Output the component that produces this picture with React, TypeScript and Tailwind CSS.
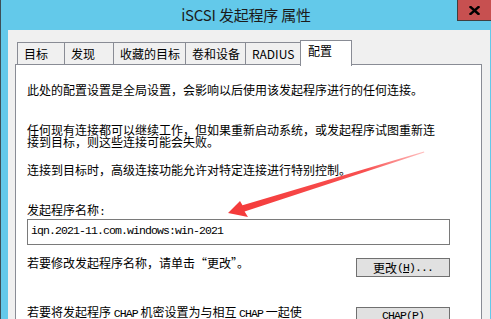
import React from "react";

const cjk = { fontFamily: '"Noto Sans CJK SC", "Noto Sans", sans-serif' };
const mono = { fontFamily: '"Liberation Mono", "Noto Sans CJK SC", monospace' };

function M({ children }: { children: React.ReactNode }) {
  return (
    <span className="text-[11.5px] tracking-[-0.9px]" style={mono}>
      {children}
    </span>
  );
}

function Tab({ label, w, active }: { label: string; w: string; active?: boolean }) {
  if (active) {
    return (
      <div
        className={`${w} h-[26px] -mb-[2px] relative z-10 bg-white border border-b-0 border-[#898c95] pl-[7px] pt-[3px] text-[12px] leading-[14px] text-black`}
      >
        {label}
      </div>
    );
  }
  return (
    <div
      className={`${w} h-[22px] bg-[#f0f0f0] border-l border-t border-[#898c95] pl-[6px] flex items-center text-[12px] leading-[12px] text-black`}
    >
      {label}
    </div>
  );
}

export default function App() {
  return (
    <div
      className="w-[491px] h-[319px] relative overflow-hidden bg-[#63c9ea] border-l border-[#3d4f57] flex flex-col"
      style={cjk}
    >
      {/* title bar */}
      <div className="h-[30px] shrink-0 relative flex items-center justify-center">
        <span className="text-[15px] leading-[18px] text-[#1b1b1b] tracking-[-0.2px]">
          iSCSI 发起程序 属性
        </span>
        <div className="absolute right-0 top-0 w-[34px] h-[21px] bg-[#c75050] border-l border-b border-[#3f3f3f] flex items-center justify-center">
          <svg width="11" height="9" viewBox="0 0 11 9">
            <path d="M1.5 1 L9.5 8 M9.5 1 L1.5 8" stroke="#000" strokeWidth="2.4" strokeLinecap="square" />
          </svg>
        </div>
      </div>

      {/* dialog body */}
      <div className="flex-1 ml-[7px] mr-px bg-[#f0f0f0] pt-[10px] pl-[7px] pr-[8px]">
        {/* tabs */}
        <div className="h-[24px] flex items-end pl-[2px]">
          <Tab label="目标" w="w-[47px]" />
          <Tab label="发现" w="w-[49px]" />
          <Tab label="收藏的目标" w="w-[72px]" />
          <Tab label="卷和设备" w="w-[60px]" />
          <Tab label="RADIUS" w="w-[55px]" />
          <Tab label="配置" w="w-[52px]" active />
        </div>

        {/* panel */}
        <div className="w-[467px] h-[260px] bg-white border border-[#898c95] pl-[11px] pt-[19px] text-[12px] leading-[12px] text-black">
          <div className="whitespace-nowrap h-[12px]">
            此处的配置设置是全局设置，会影响以后使用该发起程序进行的任何连接。
          </div>
          <div className="whitespace-nowrap h-[12px] mt-[28px]">
            任何现有连接都可以继续工作，但如果重新启动系统，或发起程序试图重新连
          </div>
          <div className="whitespace-nowrap h-[12px]">接到目标，则这些连接可能会失败。</div>
          <div className="whitespace-nowrap h-[12px] mt-[16px]">
            连接到目标时，高级连接功能允许对特定连接进行特别控制。
          </div>
          <div className="whitespace-nowrap h-[12px] mt-[28px]">
            发起程序名称<M>:</M>
          </div>
          <div className="w-[423px] h-[26px] mt-[3px] border border-[#7a7a7a] pl-[3px] pt-[3px] leading-[12px]">
            <M>iqn.2021-11.com.windows:win-2021</M>
          </div>
          <div className="flex items-start mt-[12px] h-[20px] w-[423px] justify-between">
            <div className="whitespace-nowrap leading-[12px]">若要修改发起程序名称，请单击“更改”。</div>
            <div className="w-[94px] h-[19px] mt-px bg-[#e1e1e1] border border-[#707070] flex items-center justify-center leading-[12px]">
              更改
              <M>
                (<span className="underline">H</span>)...
              </M>
            </div>
          </div>
          <div className="flex items-start mt-[29px] h-[20px] w-[423px] justify-between">
            <div className="whitespace-nowrap leading-[12px]">
              若要将发起程序 <M>CHAP</M> 机密设置为与相互 <M>CHAP</M> 一起使
            </div>
            <div className="w-[94px] h-[19px] mt-px bg-[#e1e1e1] border border-[#707070] flex items-start pt-[2px] justify-center leading-[12px]">
              <M>CHAP(P)</M>
            </div>
          </div>
        </div>
      </div>

      {/* red arrow annotation */}
      <svg className="absolute left-0 top-0 pointer-events-none" width="491" height="319" viewBox="0 0 491 319">
        <defs>
          <linearGradient id="ag" x1="227" y1="213" x2="423" y2="152" gradientUnits="userSpaceOnUse">
            <stop offset="0" stopColor="#f43a3a" />
            <stop offset="0.7" stopColor="#f85050" />
            <stop offset="1" stopColor="#ffc0c0" />
          </linearGradient>
        </defs>
        <polygon
          points="227,213 239,201 241.5,205.2 423,151.4 423.3,152.6 243.6,211.4 247,217"
          fill="url(#ag)"
        />
      </svg>
    </div>
  );
}
